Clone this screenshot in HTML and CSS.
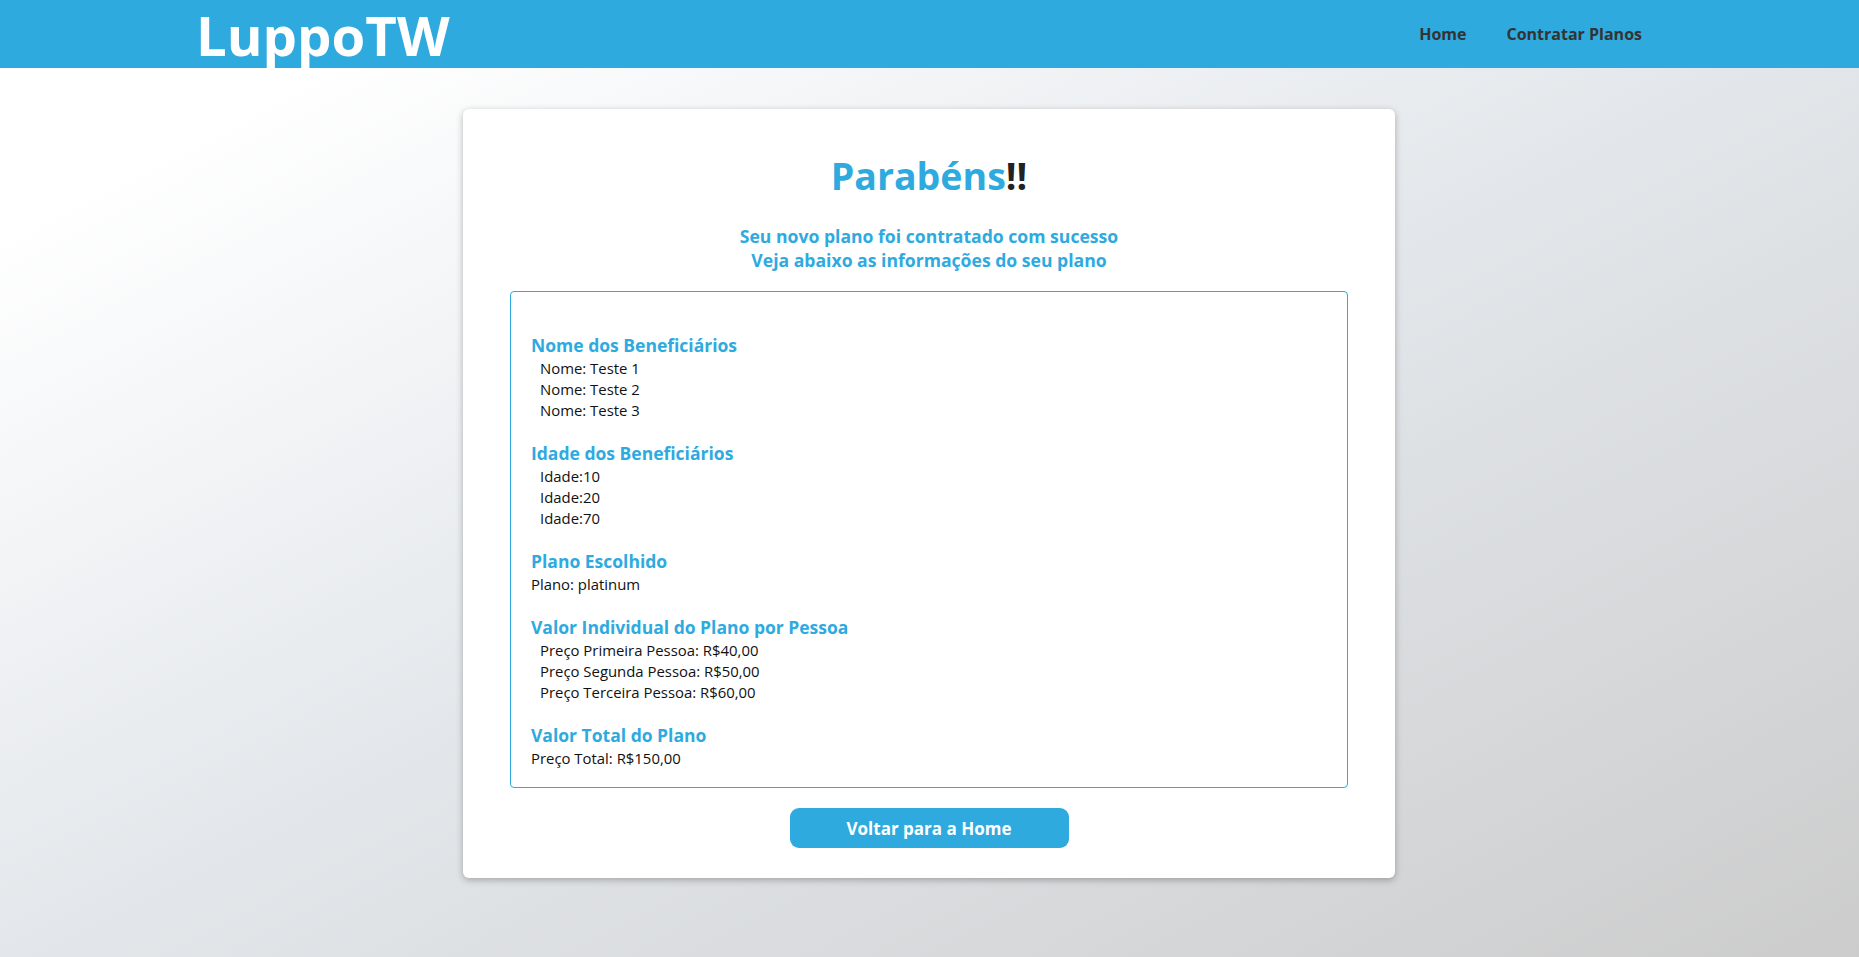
FILE: index.html
```html
<!DOCTYPE html>
<html lang="pt-BR">
<head>
<meta charset="utf-8">
<title>LuppoTW - Plano contratado</title>
<link rel="stylesheet" href="styles.css">
</head>
<body>
<header class="topbar">
  <a class="logo" href="#">LuppoTW</a>
  <nav class="nav">
    <a class="nav-link" href="#">Home</a>
    <a class="nav-link" href="#">Contratar Planos</a>
  </nav>
</header>
<main class="page">
  <section class="card">
    <h1 class="title"><span class="title-blue">Parabéns</span>!!</h1>
    <p class="subtitle">Seu novo plano foi contratado com sucesso<br>Veja abaixo as informações do seu plano</p>
    <div class="info">
      <div class="group">
        <h3 class="group-title">Nome dos Beneficiários</h3>
        <ul class="list indented">
          <li>Nome: Teste 1</li>
          <li>Nome: Teste 2</li>
          <li>Nome: Teste 3</li>
        </ul>
      </div>
      <div class="group">
        <h3 class="group-title">Idade dos Beneficiários</h3>
        <ul class="list indented">
          <li>Idade:10</li>
          <li>Idade:20</li>
          <li>Idade:70</li>
        </ul>
      </div>
      <div class="group">
        <h3 class="group-title">Plano Escolhido</h3>
        <ul class="list">
          <li>Plano: platinum</li>
        </ul>
      </div>
      <div class="group">
        <h3 class="group-title">Valor Individual do Plano por Pessoa</h3>
        <ul class="list indented">
          <li>Preço Primeira Pessoa: R$40,00</li>
          <li>Preço Segunda Pessoa: R$50,00</li>
          <li>Preço Terceira Pessoa: R$60,00</li>
        </ul>
      </div>
      <div class="group">
        <h3 class="group-title">Valor Total do Plano</h3>
        <ul class="list">
          <li>Preço Total: R$150,00</li>
        </ul>
      </div>
    </div>
    <div class="actions">
      <a class="btn" href="#">Voltar para a Home</a>
    </div>
  </section>
</main>
</body>
</html>
```
FILE: styles.css
```css
* { box-sizing: border-box; }

html, body {
  margin: 0;
  padding: 0;
}

body {
  min-height: 100vh;
  font-family: "Open Sans", "Noto Sans", "Liberation Sans", sans-serif;
  color: #111;
  background: linear-gradient(to bottom right, #ffffff 12%, #e3e7eb 50%, #cccccc 100%);
}

.topbar {
  height: 68px;
  background: #2eaadf;
  display: flex;
  align-items: center;
  justify-content: space-between;
  padding: 0 217px 0 196px;
}

.logo {
  font-size: 54.5px;
  font-weight: 700;
  line-height: 68px;
  height: 68px;
  padding-top: 1px;
  color: #ffffff;
  text-decoration: none;
}

.nav {
  display: flex;
  gap: 40px;
}

.nav-link {
  font-size: 16px;
  font-weight: 700;
  line-height: 68px;
  color: #333333;
  text-decoration: none;
}

.page {
  padding: 41px 1px 0 0;
}

.card {
  width: 932px;
  margin: 0 auto;
  background: #ffffff;
  border-radius: 6px;
  box-shadow: 0 2px 7px rgba(0, 0, 0, 0.28);
  padding: 44px 47px 30px 47px;
}

.title {
  margin: 0;
  text-align: center;
  font-size: 37.5px;
  line-height: 46px;
  font-weight: 700;
  color: #222222;
}

.title-blue {
  color: #2eaadf;
}

.subtitle {
  margin: 25px 0 0;
  text-align: center;
  font-size: 17.6px;
  line-height: 24px;
  font-weight: 700;
  color: #2eaadf;
}

.info {
  margin-top: 19px;
  border: 1px solid #2eaadf;
  border-radius: 4px;
  padding: 41px 20px 18px;
}

.group + .group {
  margin-top: 20px;
}

.group-title {
  margin: 0 0 1px;
  font-size: 17.5px;
  line-height: 24px;
  font-weight: 700;
  color: #2eaadf;
}

.list {
  list-style: none;
  margin: 0;
  padding: 0;
  font-size: 14.9px;
  line-height: 21px;
  color: #111111;
}

.list.indented {
  padding-left: 9px;
}

.actions {
  display: flex;
  justify-content: center;
  margin-top: 20px;
}

.btn {
  width: 279px;
  height: 40px;
  border-radius: 9px;
  background: #2eaadf;
  color: #ffffff;
  font-size: 17px;
  font-weight: 700;
  display: flex;
  align-items: center;
  justify-content: center;
  text-decoration: none;
}
```
